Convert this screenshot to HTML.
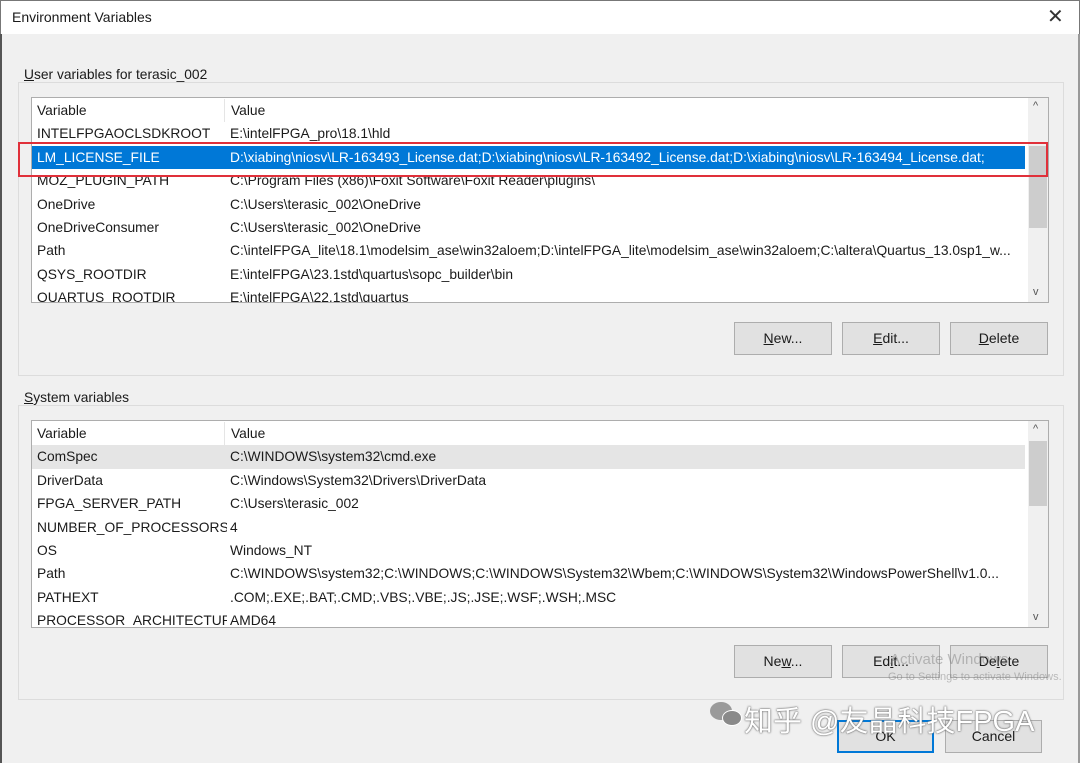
<!DOCTYPE html>
<html><head><meta charset="utf-8"><style>
*{margin:0;padding:0;box-sizing:border-box}
body{width:1080px;height:763px;background:#f0f0f0;font-family:"Liberation Sans","Noto Sans CJK SC",sans-serif;font-size:13.8px;color:#1a1a1a;position:relative;overflow:hidden}
.abs{position:absolute}
.title{left:0;top:0;width:1080px;height:34px;background:#fff;border-top:1px solid #777;border-left:1px solid #777;border-right:1px solid #777}
.grp{border:1px solid #dcdcdc}
.lbl{background:#f0f0f0;padding:0 3px;white-space:nowrap}
.list{background:#fff;border:1px solid #adadad;overflow:hidden}
.row{position:absolute;left:0;height:23.4px;line-height:23.4px;white-space:nowrap;width:993px}
.row span{position:absolute;overflow:hidden}
.c1{left:5px;width:190px}
.c2{left:198px;width:795px}
.hdr .c2{border-left:1px solid #e5e5e5;left:192px;text-indent:6px}
.sb{position:absolute;right:0;top:0;width:20px;height:100%;background:#f0f0f0}
.thumb{position:absolute;left:1px;width:18px;background:#cdcdcd}
.btn{position:absolute;width:98px;height:33px;background:#e1e1e1;border:1px solid #adadad;text-align:center;line-height:31px;font-size:14px}
</style></head><body>
<div class="abs title"><div class="abs" style="left:11px;top:8px;font-size:14px">Environment Variables</div>
<div class="abs" style="left:1046px;top:3px;font-size:20px;color:#333">✕</div></div>
<div class="abs" style="left:0;top:34px;width:2px;height:729px;background:#555"></div>
<div class="abs" style="right:0;top:34px;width:2px;height:729px;background:#999"></div>

<div class="abs grp" style="left:18px;top:82px;width:1046px;height:294px"></div>
<div class="abs lbl" style="left:21px;top:67px"><u>U</u>ser variables for terasic_002</div>
<div class="abs list" style="left:31px;top:97px;width:1018px;height:206px">
<div class="row hdr" style="top:1px"><span class="c1">Variable</span><span class="c2">Value</span></div>
<div class="row" style="top:24.4px"><span class="c1">INTELFPGAOCLSDKROOT</span><span class="c2">E:\intelFPGA_pro\18.1\hld</span></div>
<div class="row" style="top:47.8px;background:#0078d7;color:#fff"><span class="c1">LM_LICENSE_FILE</span><span class="c2">D:\xiabing\niosv\LR-163493_License.dat;D:\xiabing\niosv\LR-163492_License.dat;D:\xiabing\niosv\LR-163494_License.dat;</span></div>
<div class="row" style="top:71.2px"><span class="c1">MOZ_PLUGIN_PATH</span><span class="c2">C:\Program Files (x86)\Foxit Software\Foxit Reader\plugins\</span></div>
<div class="row" style="top:94.6px"><span class="c1">OneDrive</span><span class="c2">C:\Users\terasic_002\OneDrive</span></div>
<div class="row" style="top:118px"><span class="c1">OneDriveConsumer</span><span class="c2">C:\Users\terasic_002\OneDrive</span></div>
<div class="row" style="top:141.4px"><span class="c1">Path</span><span class="c2">C:\intelFPGA_lite\18.1\modelsim_ase\win32aloem;D:\intelFPGA_lite\modelsim_ase\win32aloem;C:\altera\Quartus_13.0sp1_w...</span></div>
<div class="row" style="top:164.8px"><span class="c1">QSYS_ROOTDIR</span><span class="c2">E:\intelFPGA\23.1std\quartus\sopc_builder\bin</span></div>
<div class="row" style="top:188.2px"><span class="c1">QUARTUS_ROOTDIR</span><span class="c2">E:\intelFPGA\22.1std\quartus</span></div>
<div class="sb"><div class="abs" style="left:5px;top:2px;font-size:11px;color:#555">^</div><div class="thumb" style="top:48px;height:82px"></div><div class="abs" style="left:5px;bottom:4px;font-size:11px;color:#555">v</div></div>
</div>
<div class="abs" style="left:18px;top:142px;width:1030px;height:35px;border:2px solid #e0303a"></div>
<div class="btn" style="left:734px;top:322px"><u>N</u>ew...</div>
<div class="btn" style="left:842px;top:322px"><u>E</u>dit...</div>
<div class="btn" style="left:950px;top:322px"><u>D</u>elete</div>

<div class="abs grp" style="left:18px;top:405px;width:1046px;height:295px"></div>
<div class="abs lbl" style="left:21px;top:390px"><u>S</u>ystem variables</div>
<div class="abs list" style="left:31px;top:420px;width:1018px;height:208px">
<div class="row hdr" style="top:1px"><span class="c1">Variable</span><span class="c2">Value</span></div>
<div class="row" style="top:24.4px;background:#e5e5e5"><span class="c1">ComSpec</span><span class="c2">C:\WINDOWS\system32\cmd.exe</span></div>
<div class="row" style="top:47.8px"><span class="c1">DriverData</span><span class="c2">C:\Windows\System32\Drivers\DriverData</span></div>
<div class="row" style="top:71.2px"><span class="c1">FPGA_SERVER_PATH</span><span class="c2">C:\Users\terasic_002</span></div>
<div class="row" style="top:94.6px"><span class="c1">NUMBER_OF_PROCESSORS</span><span class="c2">4</span></div>
<div class="row" style="top:118px"><span class="c1">OS</span><span class="c2">Windows_NT</span></div>
<div class="row" style="top:141.4px"><span class="c1">Path</span><span class="c2">C:\WINDOWS\system32;C:\WINDOWS;C:\WINDOWS\System32\Wbem;C:\WINDOWS\System32\WindowsPowerShell\v1.0...</span></div>
<div class="row" style="top:164.8px"><span class="c1">PATHEXT</span><span class="c2">.COM;.EXE;.BAT;.CMD;.VBS;.VBE;.JS;.JSE;.WSF;.WSH;.MSC</span></div>
<div class="row" style="top:188.2px"><span class="c1">PROCESSOR_ARCHITECTURE</span><span class="c2">AMD64</span></div>
<div class="sb"><div class="abs" style="left:5px;top:2px;font-size:11px;color:#555">^</div><div class="thumb" style="top:20px;height:65px"></div><div class="abs" style="left:5px;bottom:4px;font-size:11px;color:#555">v</div></div>
</div>
<div class="btn" style="left:734px;top:645px">Ne<u>w</u>...</div>
<div class="btn" style="left:842px;top:645px">Ed<u>i</u>t...</div>
<div class="btn" style="left:950px;top:645px">De<u>l</u>ete</div>
<div class="abs" style="left:890px;top:651px;font-size:15px;color:rgba(120,120,120,.45);white-space:nowrap">Activate Windows</div>
<div class="abs" style="left:888px;top:671px;font-size:11px;color:rgba(120,120,120,.45);white-space:nowrap">Go to Settings to activate Windows.</div>
<div class="btn" style="left:837px;top:720px;width:97px;border:1px solid #0078d7;box-shadow:inset 0 0 0 1px #0078d7">OK</div>
<div class="btn" style="left:945px;top:720px;width:97px">Cancel</div>
<div class="abs" style="left:710px;top:702px;width:34px;height:26px">
<div class="abs" style="left:0;top:0;width:22px;height:18px;border-radius:50%;background:#9a9a9a"></div>
<div class="abs" style="left:12px;top:8px;width:20px;height:16px;border-radius:50%;background:#8a8a8a;border:1px solid #fff"></div></div>
<div class="abs" style="left:744px;top:698px;font-size:29px;color:#fff;white-space:nowrap;text-shadow:0 0 2px #666,0 0 1px #555">知乎 @友晶科技FPGA</div>
</body></html>
